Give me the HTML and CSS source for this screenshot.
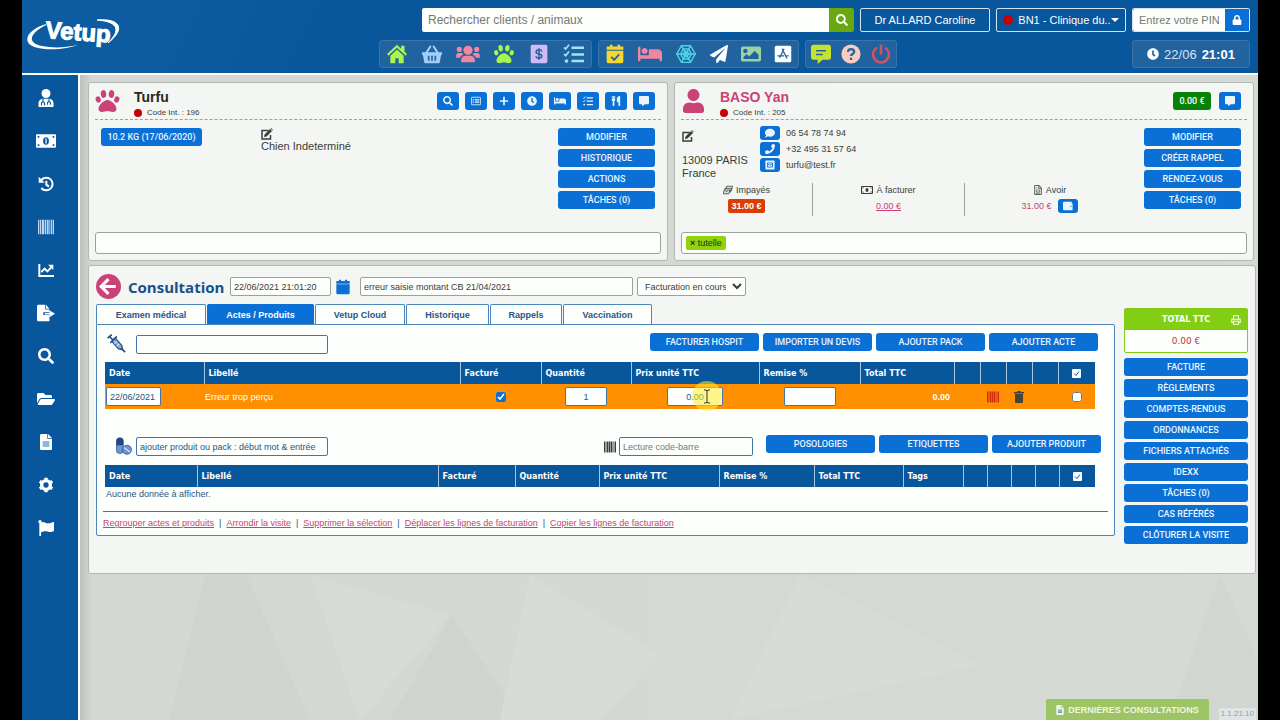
FILE: index.html
```html
<!DOCTYPE html>
<html lang="fr">
<head>
    <meta charset="UTF-8">
    <meta name="viewport" content="width=device-width, initial-scale=1.0">
    <title>Vetup - Consultation</title>
    <link rel="stylesheet" href="styles.css">
</head>
<body>
    <!-- Icônes -->
    <svg class="sprite" aria-hidden="true">
        <symbol id="search" viewBox="0 0 512 512"><path d="M505 442.7L405.3 343c-4.500-4.500-10.600-7-17-7H372c27.600-35.300 44-79.700 44-128C416 93.100 322.900 0 208 0S0 93.100 0 208s93.100 208 208 208c48.300 0 92.700-16.400 128-44v16.300c0 6.400 2.500 12.500 7 17l99.700 99.700c9.400 9.400 24.600 9.400 33.900 0l28.300-28.300c9.400-9.400 9.400-24.600.1-34zM208 336c-70.700 0-128-57.200-128-128 0-70.700 57.200-128 128-128 70.700 0 128 57.200 128 128 0 70.700-57.200 128-128 128z"/></symbol>
        <symbol id="lock" viewBox="0 0 448 512"><path d="M400 224h-24v-72C376 68.200 307.800 0 224 0S72 68.200 72 152v72H48c-26.500 0-48 21.500-48 48v192c0 26.500 21.500 48 48 48h352c26.500 0 48-21.500 48-48V272c0-26.500-21.500-48-48-48zm-104 0H152v-72c0-39.700 32.300-72 72-72s72 32.300 72 72v72z"/></symbol>
        <symbol id="clock" viewBox="0 0 512 512"><path d="M256 8C119 8 8 119 8 256s111 248 248 248 248-111 248-248S393 8 256 8zm57.100 350.100L224.900 294c-3.100-2.300-4.900-5.900-4.900-9.700V116c0-6.600 5.400-12 12-12h48c6.600 0 12 5.400 12 12v137.700l63.500 46.200c5.400 3.900 6.500 11.400 2.600 16.800l-28.200 38.800c-3.900 5.300-11.400 6.500-16.800 2.600z"/></symbol>
        <symbol id="home" viewBox="0 0 24 24"><path d="M12 1L0 12l1.500 2L12 4.500 22.500 14l1.500-2-3-2.700V2h-4v3.600z"/><path d="M12 6.500L4 14v9h6v-6h4v6h6v-9z"/></symbol>
        <symbol id="basket" viewBox="0 0 24 24"><path d="M0 10h24v3h-1l-2 10H3L1 13H0z"/><path d="M5 11l5-8M19 11l-5-8" fill="none" stroke="currentColor" stroke-width="2.500" stroke-linecap="round"/><path d="M8 14v6M12 14v6M16 14v6" stroke="#23649f" stroke-width="2"/></symbol>
        <symbol id="users" viewBox="0 0 26 24"><circle cx="13" cy="8" r="5"/><circle cx="3.500" cy="7" r="2.800"/><circle cx="22.500" cy="7" r="2.800"/><path d="M5.500 21v-2c0-3 2-5 5-5h5c3 0 5 2 5 5v2zM0 16v-2c0-2 1-3 3-3h3c1 0 1.500 1 2 1.500-2 1-3 2-3.500 3.500zM26 16v-2c0-2-1-3-3-3h-3c-1 0-1.500 1-2 1.500 2 1 3 2 3.500 3.500z"/></symbol>
        <symbol id="paw" viewBox="0 0 24 24"><path d="M12 11c-4 0-9 5.500-9 9 0 2 1.500 3 3.600 3 2.200 0 3.500-1 5.400-1s3.200 1 5.400 1c2.100 0 3.600-1 3.600-3 0-3.500-5-9-9-9z"/><ellipse cx="2.700" cy="10.500" rx="2.500" ry="3.200" transform="rotate(-18 2.700 10.500)"/><ellipse cx="8" cy="5" rx="2.700" ry="3.900" transform="rotate(-8 8 5)"/><ellipse cx="16" cy="5" rx="2.700" ry="3.900" transform="rotate(8 16 5)"/><ellipse cx="21.300" cy="10.500" rx="2.500" ry="3.200" transform="rotate(18 21.300 10.500)"/></symbol>
        <symbol id="dollar" viewBox="0 0 24 24"><rect x="2" y="1" width="20" height="22" rx="2"/><path d="M15.500 9c-.5-1.500-2-2-3.500-2-2 0-3.500 1-3.500 2.500 0 3.500 7 1.500 7 5 0 1.500-1.500 2.500-3.500 2.500s-3.500-1-3.700-2.300M12 5v14" fill="none" stroke="#23649f" stroke-width="1.800"/></symbol>
        <symbol id="tasks" viewBox="0 0 24 24"><path d="M9 3h15v3H9zM9 11h15v3H9zM9 19h15v3H9z"/><circle cx="3" cy="20.500" r="2.200"/><path d="M0 4l2 2 4-5M0 12l2 2 4-5" fill="none" stroke="currentColor" stroke-width="2"/></symbol>
        <symbol id="calcheck" viewBox="0 0 24 24"><path d="M2 4c0-1 .5-1 1-1h3V1h3v2h6V1h3v2h3c.5 0 1 0 1 1v3H2zM2 8h20v13c0 1-1 2-2 2H4c-1 0-2-1-2-2z"/><path d="M7.500 15.500l3.500 3.500 6-6.500" fill="none" stroke="#23649f" stroke-width="2.200"/></symbol>
        <symbol id="calendar" viewBox="0 0 24 24"><path d="M2 4c0-1 .5-1 1-1h3V1h3v2h6V1h3v2h3c.5 0 1 0 1 1v3H2zM2 8h20v13c0 1-1 2-2 2H4c-1 0-2-1-2-2z"/></symbol>
        <symbol id="bed" viewBox="0 0 640 512"><path d="M176 256c44.100 0 80-35.900 80-80s-35.900-80-80-80-80 35.900-80 80 35.900 80 80 80zm352-128H304c-8.800 0-16 7.200-16 16v144H64V80c0-8.800-7.200-16-16-16H16C7.200 64 0 71.200 0 80v352c0 8.800 7.200 16 16 16h32c8.800 0 16-7.200 16-16v-48h512v48c0 8.800 7.200 16 16 16h32c8.800 0 16-7.200 16-16V240c0-61.900-50.100-112-112-112z"/></symbol>
        <symbol id="web" viewBox="0 0 24 24"><g fill="none" stroke="currentColor" stroke-width="1.700"><path d="M6.500 2h11l5.500 10-5.500 10h-11L1 12z"/><path d="M9 6h6l3.500 6L15 18H9l-3.500-6zM10.500 9h3l1.700 3-1.700 3h-3l-1.700-3z"/><path d="M6.500 2l11 20M17.500 2l-11 20M0 12h24"/></g></symbol>
        <symbol id="plane" viewBox="0 0 512 512"><path d="M476 3.200L12.500 270.600c-18.100 10.400-15.800 35.600 2.200 43.200L121 358.400l287.300-253.200c5.500-4.900 13.300 2.600 8.600 8.300L176 407v80.500c0 23.600 28.500 32.900 42.500 15.800L282 426l124.600 52.200c14.200 6 30.400-2.900 33-18.200l72-432C515 7.800 493.300-6.800 476 3.200z"/></symbol>
        <symbol id="image" viewBox="0 0 512 512"><path d="M464 448H48c-26.500 0-48-21.500-48-48V112c0-26.500 21.500-48 48-48h416c26.500 0 48 21.500 48 48v288c0 26.500-21.500 48-48 48zM112 120c-31 0-56 25-56 56s25 56 56 56 56-25 56-56-25-56-56-56zM64 384h384V272l-87.500-87.500c-4.700-4.700-12.300-4.700-17 0L208 320l-55.500-55.500c-4.700-4.700-12.300-4.700-17 0L64 336v48z"/></symbol>
        <symbol id="app" viewBox="0 0 24 24"><rect x="1" y="1" width="22" height="22" rx="2"/><path d="M13.500 5L7.500 17M10.800 5l6.500 13M4.500 14.500h9M16.500 14.500h3" fill="none" stroke="#23649f" stroke-width="1.700"/></symbol>
        <symbol id="message" viewBox="0 0 24 24"><path d="M3 1h18c1.500 0 3 1 3 3v12c0 2-1.500 3-3 3h-7l-6 5v-5H3c-1.500 0-3-1-3-3V4c0-2 1.500-3 3-3z"/><path d="M6 8h12M6 12.500h8" stroke="#23649f" stroke-width="1.800"/></symbol>
        <symbol id="help" viewBox="0 0 24 24"><circle cx="12" cy="12" r="11.500"/><path d="M8.300 9.500C8.500 7 10 6 12 6c2.300 0 3.800 1.300 3.800 3.200 0 2.800-3.800 2.800-3.800 5.300M12 16.500v2.700" fill="none" stroke="#23649f" stroke-width="2.700"/></symbol>
        <symbol id="power" viewBox="0 0 24 24"><path d="M7 4.500a9.500 9.500 0 1 0 10 0M12 1v12" fill="none" stroke="currentColor" stroke-width="3"/></symbol>
        <symbol id="doctor" viewBox="0 0 24 24"><circle cx="12" cy="6" r="6"/><path d="M2 24v-5c0-4 3-6 6-6h8c3 0 6 2 6 6v5z"/><path d="M8 13v4M16 13v3M6 22v-2c0-4 4-4 4 0v2M14 21v-2c0-3 4-3 4 0v2" fill="none" stroke="#08569c" stroke-width="1.500"/></symbol>
        <symbol id="money" viewBox="0 0 24 24"><rect y="4" width="24" height="16" rx="1"/><ellipse cx="12" cy="12" rx="3.500" ry="4.500" fill="#08569c"/><path d="M12 9v6" stroke="#fff" stroke-width="1.500"/><path d="M2 6h2v2H2zM20 6h2v2h-2zM2 16h2v2H2zM20 16h2v2h-2z" fill="#08569c"/></symbol>
        <symbol id="moneyline" viewBox="0 0 24 16"><path d="M1 1h22v14H1z" fill="none" stroke="currentColor" stroke-width="2"/><ellipse cx="12" cy="8" rx="3" ry="4"/><path d="M3 3h3L3 6zM21 3h-3l3 3zM3 13h3l-3-3zM21 13h-3l3-3z"/></symbol>
        <symbol id="history" viewBox="0 0 24 24"><path d="M5 6a9.500 9.500 0 1 1 0 12M12.500 7v6l4 3" fill="none" stroke="currentColor" stroke-width="3"/><path d="M1 1v9h9z"/></symbol>
        <symbol id="barcode" viewBox="0 0 24 22"><path d="M0 0h2v22H0zM3 0h2v22H3zM6 0h3v22H6zM10 0h2v22h-2zM13 0h3v22h-3zM17 0h1v22h-1zM19 0h2v22h-2zM22 0h2v22h-2z"/></symbol>
        <symbol id="chart" viewBox="0 0 24 24"><path d="M2 3v18h22" fill="none" stroke="currentColor" stroke-width="3"/><path d="M5 15l5-5 4 4 6-6" fill="none" stroke="currentColor" stroke-width="3"/><path d="M15 4h8v8z"/></symbol>
        <symbol id="export" viewBox="0 0 26 24"><path d="M2 0h10v7h6v4H9v4h9v9H2c-1 0-2-1-2-2V2c0-1 1-2 2-2zM13 0l5 6h-5z"/><path d="M18 8l8 5-8 5v-4h-7v-2h7z"/></symbol>
        <symbol id="folder" viewBox="0 0 576 512"><path d="M572.700 292L500.300 416.200A64 64 0 0 1 445 448H45c-18.500 0-30-20-20.700-36l72.400-124.200A64 64 0 0 1 152 256h400c18.500 0 30 20 20.700 36zM152 224h328v-48c0-26.500-21.500-48-48-48H272l-64-64H48C21.500 64 0 85.500 0 112v278l69-118.400C86.200 242.200 118 224 152 224z"/></symbol>
        <symbol id="file" viewBox="0 0 18 24"><path d="M2 0h9v7h7v15c0 1-1 2-2 2H2c-1 0-2-1-2-2V2c0-1 1-2 2-2zM12 0l6 6h-6z"/><path d="M4 12h10M4 15h10M4 18h10" stroke="#08569c" stroke-width="1.300"/></symbol>
        <symbol id="gear" viewBox="0 0 24 24"><circle cx="12" cy="12" r="6.500" fill="none" stroke="currentColor" stroke-width="5"/><path d="M12 1v4M12 19v4M2.500 6.500L6 8.500M18 15.500l3.500 2M2.500 17.500l3.500-2M18 8.500l3.500-2" stroke="currentColor" stroke-width="5"/></symbol>
        <symbol id="flag" viewBox="0 0 24 24"><circle cx="3" cy="2.500" r="2.500"/><path d="M2 2h2.500v22H2zM4 4c5-3 8 2 12 1 3 0 5-1.500 8-2v13c-4 3-8 2-11 1-3-.500-5 0-9 2z"/></symbol>
        <symbol id="user" viewBox="0 0 448 512"><path d="M224 256c70.700 0 128-57.300 128-128S294.700 0 224 0 96 57.300 96 128s57.300 128 128 128zm89.600 32h-16.700c-22.200 10.200-46.900 16-72.900 16s-50.600-5.800-72.900-16h-16.700C60.200 288 0 348.200 0 422.400V464c0 26.500 21.500 48 48 48h352c26.500 0 48-21.500 48-48v-41.600c0-74.200-60.200-134.400-134.400-134.400z"/></symbol>
        <symbol id="list" viewBox="0 0 24 20"><rect x="1" y="1" width="22" height="18" rx="2" fill="none" stroke="currentColor" stroke-width="2"/><path d="M4 5h3v2H4zM9 5h11v2H9zM4 9h3v2H4zM9 9h11v2H9zM4 13h3v2H4zM9 13h11v2H9z"/></symbol>
        <symbol id="plus" viewBox="0 0 24 24"><path d="M10 2h4v8h8v4h-8v8h-4v-8H2v-4h8z"/></symbol>
        <symbol id="utensils" viewBox="0 0 24 24"><path d="M2 0h2v7h1V0h2v7h1V0h2v9c0 2-1 3-2 3v12H4V12c-1 0-2-1-2-3zM22 0v24h-4v-9h-4V7c0-4 4-7 8-7z"/></symbol>
        <symbol id="bubble" viewBox="0 0 512 512"><path d="M448 0H64C28.700 0 0 28.700 0 64v288c0 35.300 28.700 64 64 64h96v84c0 9.800 11.200 15.500 19.100 9.700L304 416h144c35.300 0 64-28.700 64-64V64c0-35.300-28.700-64-64-64z"/></symbol>
        <symbol id="comment" viewBox="0 0 512 512"><path d="M256 32C114.600 32 0 125.100 0 240c0 49.600 21.400 95 57 130.700C44.500 421.100 2.700 466 2.200 466.500c-2.200 2.300-2.800 5.700-1.500 8.700S4.800 480 8 480c66.300 0 116-31.800 140.600-51.400 32.700 12.300 69 19.400 107.400 19.400 141.400 0 256-93.100 256-208S397.400 32 256 32z"/></symbol>
        <symbol id="phone" viewBox="0 0 512 512"><path d="M493.400 24.600l-104-24c-11.300-2.600-22.900 3.300-27.500 13.900l-48 112c-4.200 9.800-1.400 21.300 6.900 28l60.600 49.600c-36 76.700-98.900 140.500-177.200 177.200l-49.600-60.600c-6.800-8.300-18.200-11.100-28-6.900l-112 48C3.900 366.500-2 378.100.6 389.400l24 104C27.100 504.200 36.700 512 48 512c256.100 0 464-207.500 464-464 0-11.200-7.700-20.900-18.600-23.400z"/></symbol>
        <symbol id="mail" viewBox="0 0 24 24"><rect x="1" y="1" width="22" height="22" rx="2"/><path d="M6 7h12v10H6zM6 9l6 4 6-4" fill="none" stroke="#0b70d5" stroke-width="2"/></symbol>
        <symbol id="edit" viewBox="0 0 24 24"><path d="M15 5H2v17h17v-8" fill="none" stroke="currentColor" stroke-width="3"/><path d="M7 13L18 2l4 4-11 11-5 1zM19 1l1-1 4 4-1 1z"/></symbol>
        <symbol id="stack" viewBox="0 0 24 24"><g fill="none" stroke="currentColor" stroke-width="2"><path d="M7 8l2-5h14l-3 10h-3M4 12l1-4h15l-2 9h-3"/><path d="M3 12h13l-2 9H1z"/><path d="M6 16h5"/></g></symbol>
        <symbol id="doc" viewBox="0 0 20 24"><path d="M2 1h11l5 6v16H2zM12 1v7h6" fill="none" stroke="currentColor" stroke-width="2"/><path d="M5 7h4M6 12h8v5H6zM5 20h10" fill="none" stroke="currentColor" stroke-width="1.500"/></symbol>
        <symbol id="wallet" viewBox="0 0 24 24"><path d="M2 2h19v4h2v16H2c-1 0-2-1-2-2V4c0-1 1-2 2-2z"/><circle cx="19" cy="13" r="1.500" fill="#0b70d5"/></symbol>
        <symbol id="back" viewBox="0 0 24 24"><circle cx="12" cy="12" r="12"/><path d="M19 12H6M12 5l-7 7 7 7" fill="none" stroke="#fff" stroke-width="3"/></symbol>
        <symbol id="syringe" viewBox="0 0 24 24"><path d="M7 10l4-4 8 9 1 5-5-1z" fill="#8eaee0" stroke="#2b4f8c" stroke-width="1.500"/><path d="M18 18l5 5M5 12l8-8M2 6l5-4M4 4l5 5" stroke="#2b4f8c" stroke-width="2"/><path d="M10 13l3-3M13 16l3-3" stroke="#fff"/></symbol>
        <symbol id="pills" viewBox="0 0 24 24"><rect x="2" y="1" width="9" height="21" rx="4" fill="#6b93d6" stroke="#2b4f8c"/><path d="M2 11h9V5c0-5-9-5-9 0z" fill="#22477f"/><circle cx="16" cy="17" r="6" fill="#6b93d6" stroke="#2b4f8c"/><path d="M12 14l8 6" stroke="#dce8fb" stroke-width="1.500"/></symbol>
        <symbol id="trash" viewBox="0 0 20 24"><path d="M0 2h6l1-2h6l1 2h6v3H0zM2 6h16v16c0 1-1 2-2 2H4c-1 0-2-1-2-2z"/></symbol>
        <symbol id="print" viewBox="0 0 24 24"><path d="M6 10V2h12v8M6 18H2v-8h20v8h-4M6 15h12v7H6z" fill="none" stroke="currentColor" stroke-width="2.500"/></symbol>
    </svg>

    <div class="app">
        <header class="entete">
            <a class="logo" href="#" aria-label="Vetup">
                <svg viewBox="0 0 96 42" width="96" height="42">
                    <path d="M20 13C0 19-6 33 12 37c14 3 32 0 40-3-14 3-26 3-36 1C0 32 4 22 20 14z" fill="#fff"/>
                    <path d="M71 9c22-2 30 8 11 23 12-12 12-21-11-23z" fill="#fff" stroke="#fff"/>
                    <text x="19" y="27" transform="rotate(4 19 27)" class="logo-texte">Vetup</text>
                </svg>
            </a>
            <div class="outils">
                <div class="ligne-recherche">
                    <form class="recherche">
                        <input type="text" aria-label="Rechercher" placeholder="Rechercher clients / animaux">
                        <button type="button" class="btn-recherche" aria-label="Rechercher"><svg class="ico-12"><use href="#search"/></svg></button>
                    </form>
                    <button class="btn-contour">Dr ALLARD Caroline</button>
                    <button class="btn-contour"><span class="point"></span>BN1 - Clinique du..<span class="fleche"></span></button>
                    <form class="pin">
                        <input type="text" aria-label="Code PIN" placeholder="Entrez votre PIN">
                        <button type="button" aria-label="Verrouiller"><svg class="ico-10"><use href="#lock"/></svg></button>
                    </form>
                </div>
                <div class="ligne-icones">
                    <nav class="groupe">
                        <a href="#" aria-label="Accueil" class="vert"><svg class="ico-22"><use href="#home"/></svg></a>
                        <a href="#" aria-label="Ventes" class="ciel"><svg class="ico-22"><use href="#basket"/></svg></a>
                        <a href="#" aria-label="Clients" class="rose"><svg class="ico-24"><use href="#users"/></svg></a>
                        <a href="#" aria-label="Animaux" class="vert"><svg class="ico-22"><use href="#paw"/></svg></a>
                        <a href="#" aria-label="Caisse" class="mauve"><svg class="ico-22"><use href="#dollar"/></svg></a>
                        <a href="#" aria-label="Tâches" class="cyan"><svg class="ico-22"><use href="#tasks"/></svg></a>
                    </nav>
                    <nav class="groupe">
                        <a href="#" aria-label="Agenda" class="jaune"><svg class="ico-20"><use href="#calcheck"/></svg></a>
                        <a href="#" aria-label="Hospitalisation" class="rose"><svg class="ico-24"><use href="#bed"/></svg></a>
                        <a href="#" aria-label="Réseau" class="turquoise"><svg class="ico-22"><use href="#web"/></svg></a>
                        <a href="#" aria-label="Envois"><svg class="ico-18"><use href="#plane"/></svg></a>
                        <a href="#" aria-label="Images" class="sauge"><svg class="ico-20"><use href="#image"/></svg></a>
                        <a href="#" aria-label="Applications"><svg class="ico-18"><use href="#app"/></svg></a>
                    </nav>
                    <nav class="groupe serre">
                        <a href="#" aria-label="Messages" class="citron"><svg class="ico-20"><use href="#message"/></svg></a>
                        <a href="#" aria-label="Aide" class="peche"><svg class="ico-20"><use href="#help"/></svg></a>
                        <a href="#" aria-label="Quitter" class="rouge"><svg class="ico-20"><use href="#power"/></svg></a>
                    </nav>
                    <div class="horloge"><svg class="ico-12"><use href="#clock"/></svg><span>22/06</span><b>21:01</b></div>
                </div>
            </div>
        </header>

        <div class="corps">
            <nav class="menu">
                <a href="#" aria-label="Vétérinaires"><svg class="ico-18"><use href="#doctor"/></svg></a>
                <a href="#" aria-label="Paiements"><svg class="ico-20"><use href="#money"/></svg></a>
                <a href="#" aria-label="Historique"><svg class="ico-16"><use href="#history"/></svg></a>
                <a href="#" aria-label="Produits" class="pale"><svg class="ico-16"><use href="#barcode"/></svg></a>
                <a href="#" aria-label="Statistiques"><svg class="ico-16"><use href="#chart"/></svg></a>
                <a href="#" aria-label="Export"><svg class="ico-18"><use href="#export"/></svg></a>
                <a href="#" aria-label="Recherche"><svg class="ico-16"><use href="#search"/></svg></a>
                <a href="#" aria-label="Dossiers"><svg class="ico-18"><use href="#folder"/></svg></a>
                <a href="#" aria-label="Documents"><svg class="ico-16"><use href="#file"/></svg></a>
                <a href="#" aria-label="Réglages"><svg class="ico-16"><use href="#gear"/></svg></a>
                <a href="#" aria-label="Signalement"><svg class="ico-16"><use href="#flag"/></svg></a>
            </nav>

            <main class="contenu">
                <svg class="fond" viewBox="0 0 1178 645" preserveAspectRatio="none" aria-hidden="true">
                    <path d="M140 440l90 205H90zM372 540l70 105H310zM1140 500l-50 145h88v-60z" fill="#c8cdc8"/>
                    <path d="M450 500l130 80-60 65H420zM720 500l180 90-250 55zM230 500l140 40-90 105z" fill="#dfe3de"/>
                </svg>
                <div class="fiches">
                    <!-- Animal -->
                    <section class="carte fiche">
                        <div class="fiche-titre">
                            <svg class="avatar"><use href="#paw"/></svg>
                            <div class="identite">
                                <h2>Turfu</h2>
                                <p class="code"><span class="point"></span>Code Int. : 196</p>
                            </div>
                            <div class="actions">
                                <button class="btn" aria-label="Rechercher"><svg class="ico-10"><use href="#search"/></svg></button>
                                <button class="btn" aria-label="Liste"><svg class="ico-10"><use href="#list"/></svg></button>
                                <button class="btn" aria-label="Ajouter"><svg class="ico-10"><use href="#plus"/></svg></button>
                                <button class="btn" aria-label="Rendez-vous"><svg class="ico-10"><use href="#clock"/></svg></button>
                                <button class="btn" aria-label="Hospitaliser"><svg class="ico-12"><use href="#bed"/></svg></button>
                                <button class="btn" aria-label="Tâches"><svg class="ico-10"><use href="#tasks"/></svg></button>
                                <button class="btn" aria-label="Alimentation"><svg class="ico-10"><use href="#utensils"/></svg></button>
                                <button class="btn" aria-label="Commentaire"><svg class="ico-10"><use href="#bubble"/></svg></button>
                            </div>
                        </div>
                        <div class="fiche-corps animal">
                            <div class="poids"><button class="btn">10.2 KG (17/06/2020)</button></div>
                            <div class="espece">
                                <svg class="ico-12"><use href="#edit"/></svg>
                                <p>Chien Indeterminé</p>
                            </div>
                            <div class="boutons">
                                <button class="btn">MODIFIER</button>
                                <button class="btn">HISTORIQUE</button>
                                <button class="btn">ACTIONS</button>
                                <button class="btn">TÂCHES (0)</button>
                            </div>
                        </div>
                        <input type="text" class="etiquettes" aria-label="Étiquettes de l'animal">
                    </section>

                    <!-- Client -->
                    <section class="carte fiche">
                        <div class="fiche-titre">
                            <svg class="avatar"><use href="#user"/></svg>
                            <div class="identite">
                                <h2 class="client">BASO Yan</h2>
                                <p class="code"><span class="point"></span>Code Int. : 205</p>
                            </div>
                            <div class="actions large">
                                <button class="btn solde">0.00 €</button>
                                <button class="btn" aria-label="Commentaire"><svg class="ico-10"><use href="#bubble"/></svg></button>
                            </div>
                        </div>
                        <div class="fiche-corps">
                            <div class="infos">
                                <div class="coordonnees">
                                    <div class="adresse">
                                        <svg class="ico-12"><use href="#edit"/></svg>
                                        <p>13009 PARIS<br>France</p>
                                    </div>
                                    <ul class="contacts">
                                        <li><button class="btn mini" aria-label="SMS"><svg class="ico-10"><use href="#comment"/></svg></button>06 54 78 74 94</li>
                                        <li><button class="btn mini" aria-label="Appeler"><svg class="ico-10"><use href="#phone"/></svg></button>+32 495 31 57 64</li>
                                        <li><button class="btn mini" aria-label="Écrire"><svg class="ico-10"><use href="#mail"/></svg></button>turfu@test.fr</li>
                                    </ul>
                                </div>
                                <div class="finances">
                                    <div>
                                        <p><svg class="ico-10"><use href="#stack"/></svg> Impayés</p>
                                        <p><span class="impaye">31.00 €</span></p>
                                    </div>
                                    <div>
                                        <p><svg class="ico-12"><use href="#moneyline"/></svg> À facturer</p>
                                        <p><a href="#">0.00 €</a></p>
                                    </div>
                                    <div>
                                        <p><svg class="ico-10"><use href="#doc"/></svg> Avoir</p>
                                        <p class="avoir">31.00 € <button class="btn mini" aria-label="Portefeuille"><svg class="ico-10"><use href="#wallet"/></svg></button></p>
                                    </div>
                                </div>
                            </div>
                            <div class="boutons">
                                <button class="btn">MODIFIER</button>
                                <button class="btn">CRÉER RAPPEL</button>
                                <button class="btn">RENDEZ-VOUS</button>
                                <button class="btn">TÂCHES (0)</button>
                            </div>
                        </div>
                        <div class="etiquettes"><button class="tag"><b>×</b> tutelle</button></div>
                    </section>
                </div>

                <!-- Consultation -->
                <section class="carte consultation">
                    <div class="visite">
                        <div class="visite-titre">
                            <a href="#" class="retour" aria-label="Retour"><svg><use href="#back"/></svg></a>
                            <h1>Consultation</h1>
                            <input type="text" class="champ date-heure" aria-label="Date" value="22/06/2021 21:01:20">
                            <button class="agenda" aria-label="Calendrier"><svg class="ico-16"><use href="#calendar"/></svg></button>
                            <input type="text" class="champ motif" aria-label="Motif" value="erreur saisie montant CB 21/04/2021">
                            <select class="champ statut" aria-label="Statut">
                                <option>Facturation en cours</option>
                            </select>
                        </div>

                        <div class="onglets">
                            <button class="onglet o-110">Examen médical</button>
                            <button class="onglet o-107 actif">Actes / Produits</button>
                            <button class="onglet o-90">Vetup Cloud</button>
                            <button class="onglet o-83">Historique</button>
                            <button class="onglet o-72">Rappels</button>
                            <button class="onglet o-89">Vaccination</button>
                        </div>

                        <div class="panneau">
                            <div class="barre">
                                <svg class="ico-20"><use href="#syringe"/></svg>
                                <input type="text" class="saisie" aria-label="Ajouter un acte">
                                <div class="barre-btns">
                                    <button class="btn">FACTURER HOSPIT</button>
                                    <button class="btn">IMPORTER UN DEVIS</button>
                                    <button class="btn">AJOUTER PACK</button>
                                    <button class="btn">AJOUTER ACTE</button>
                                </div>
                            </div>

                            <table class="grille actes">
                                <colgroup>
                                    <col class="c-date"><col><col class="c-facture"><col class="c-quantite"><col class="c-prix"><col class="c-remise"><col class="c-total">
                                    <col class="c-ico"><col class="c-ico"><col class="c-ico"><col class="c-ico"><col class="c-coche">
                                </colgroup>
                                <thead>
                                    <tr>
                                        <th>Date</th><th>Libellé</th><th>Facturé</th><th>Quantité</th><th>Prix unité TTC</th><th>Remise %</th><th>Total TTC</th>
                                        <th></th><th></th><th></th><th></th>
                                        <th class="centre"><input type="checkbox" class="coche" aria-label="Tout cocher" checked></th>
                                    </tr>
                                </thead>
                                <tbody>
                                    <tr>
                                        <td class="bord"><input type="text" class="saisie w-55" aria-label="Date de l'acte" value="22/06/2021"></td>
                                        <td class="bord">Erreur trop perçu</td>
                                        <td class="centre"><input type="checkbox" class="case" aria-label="Facturé" checked></td>
                                        <td class="centre"><input type="text" class="saisie w-42" aria-label="Quantité" value="1"></td>
                                        <td class="centre prix">
                                            <input type="text" class="saisie w-56" aria-label="Prix unité TTC" value="0.00">
                                            <svg class="curseur" viewBox="0 0 30 30"><circle cx="15" cy="15" r="15" fill="#ffee32" fill-opacity=".55"/><path d="M12 9h2l1 1 1-1h2M15 10v11M12 22h2l1-1 1 1h2" fill="none" stroke="#333"/></svg>
                                        </td>
                                        <td class="centre"><input type="text" class="saisie w-52" aria-label="Remise"></td>
                                        <td class="droite">0.00</td>
                                        <td></td>
                                        <td class="centre lot"><svg class="ico-12"><use href="#barcode"/></svg></td>
                                        <td class="centre poubelle"><svg class="ico-12"><use href="#trash"/></svg></td>
                                        <td></td>
                                        <td class="centre"><input type="checkbox" class="case" aria-label="Sélectionner"></td>
                                    </tr>
                                </tbody>
                            </table>

                            <div class="barre produits">
                                <svg class="ico-18"><use href="#pills"/></svg>
                                <input type="text" class="saisie" aria-label="Ajouter un produit" value="ajouter produit ou pack : début mot &amp; entrée">
                                <div class="code-barre">
                                    <svg class="ico-12"><use href="#barcode"/></svg>
                                    <input type="text" class="saisie" aria-label="Code-barre" placeholder="Lecture code-barre">
                                </div>
                                <div class="barre-btns">
                                    <button class="btn">POSOLOGIES</button>
                                    <button class="btn">ETIQUETTES</button>
                                    <button class="btn">AJOUTER PRODUIT</button>
                                </div>
                            </div>

                            <table class="grille">
                                <colgroup>
                                    <col class="p-date"><col><col class="p-facture"><col class="p-quantite"><col class="p-prix"><col class="p-remise"><col class="p-total"><col class="p-tags">
                                    <col class="p-ico"><col class="p-ico"><col class="p-ico"><col class="p-ico"><col class="p-coche">
                                </colgroup>
                                <thead>
                                    <tr>
                                        <th>Date</th><th>Libellé</th><th>Facturé</th><th>Quantité</th><th>Prix unité TTC</th><th>Remise %</th><th>Total TTC</th><th>Tags</th>
                                        <th></th><th></th><th></th><th></th>
                                        <th class="centre"><input type="checkbox" class="coche" aria-label="Tout cocher" checked></th>
                                    </tr>
                                </thead>
                            </table>
                            <p class="vide">Aucune donnée à afficher.</p>

                            <div class="liens">
                                <a href="#">Regrouper actes et produits</a><span>|</span>
                                <a href="#">Arrondir la visite</a><span>|</span>
                                <a href="#">Supprimer la sélection</a><span>|</span>
                                <a href="#">Déplacer les lignes de facturation</a><span>|</span>
                                <a href="#">Copier les lignes de facturation</a>
                            </div>
                        </div>
                    </div>

                    <aside class="resume">
                        <div class="total">
                            <div class="total-titre">TOTAL TTC<svg class="ico-10"><use href="#print"/></svg></div>
                            <div class="total-montant">0.00 €</div>
                        </div>
                        <button class="btn">FACTURE</button>
                        <button class="btn">RÈGLEMENTS</button>
                        <button class="btn">COMPTES-RENDUS</button>
                        <button class="btn">ORDONNANCES</button>
                        <button class="btn">FICHIERS ATTACHÉS</button>
                        <button class="btn">IDEXX</button>
                        <button class="btn">TÂCHES (0)</button>
                        <button class="btn">CAS RÉFÉRÉS</button>
                        <button class="btn">CLÔTURER LA VISITE</button>
                    </aside>
                </section>

                <footer class="pied">
                    <button class="dernieres"><svg class="ico-10"><use href="#file"/></svg>DERNIÈRES CONSULTATIONS</button>
                    <span class="version">1.1.21.10</span>
                </footer>
            </main>
        </div>
    </div>
</body>
</html>
```

FILE: styles.css
```css
:root {
    --bleu: #08569c;
    --bleu-vif: #0b70d5;
    --rose: #cb4277;
    --texte: #3a3d3a;
    --texte-bleu: #2a5585;
    --blanc: #fcfffb;
    --bord: #9da19d;
}

* {
    box-sizing: border-box;
}

body {
    margin: 0;
    background: #000;
    color: var(--texte);
    font-family: "Liberation Sans", Arial, sans-serif;
    font-size: 9px;
}

h1, h2, p, ul {
    margin: 0;
    padding: 0;
}

ul {
    list-style: none;
}

svg {
    fill: currentColor;
    display: block;
    flex: none;
}

input, select, button {
    font: inherit;
    color: inherit;
    margin: 0;
}

button {
    cursor: pointer;
    border: 0;
    padding: 0;
}

.sprite {
    display: none;
}

.ico-10 { width: 10px; height: 10px; }
.ico-12 { width: 12px; height: 12px; }
.ico-16 { width: 16px; height: 16px; }
.ico-18 { width: 18px; height: 18px; }
.ico-20 { width: 20px; height: 20px; }
.ico-22 { width: 22px; height: 20px; }
.ico-24 { width: 24px; height: 22px; }

.app {
    margin: 0 22px;
    min-height: 100vh;
    display: flex;
    flex-direction: column;
}

/* En-tête */
.entete {
    display: flex;
    height: 75px;
    padding: 8px 8px 0 4px;
    background: linear-gradient(115deg, #0d5ba1 0%, #0d5ba1 12%, var(--bleu) 26%, var(--bleu) 100%);
    border-bottom: 2px solid #fff;
}

.logo {
    width: 353px;
    padding-top: 3px;
}

.logo-texte {
    font-family: "Liberation Sans", Arial, sans-serif;
    font-weight: bold;
    font-size: 24px;
    fill: #fff;
    stroke: #fff;
}

.outils {
    flex: 1;
    min-width: 0;
}

.ligne-recherche {
    display: flex;
    gap: 6px;
    height: 24px;
    padding-left: 43px;
    font-size: 11px;
}

.recherche {
    flex: 1;
    display: flex;
    font-size: 12px;
}

.recherche input,
.pin input {
    flex: 1;
    min-width: 0;
    border: 0;
    padding: 0 6px;
    background: var(--blanc);
    border-radius: 2px 0 0 2px;
}

::placeholder {
    color: #747a74;
    opacity: 1;
}

.btn-recherche {
    width: 25px;
    display: grid;
    place-items: center;
    background: #6aa812;
    color: #fff;
    border-radius: 0 2px 2px 0;
}

.btn-contour {
    width: 130px;
    display: flex;
    align-items: center;
    justify-content: center;
    background: transparent;
    color: #fff;
    border: 1px solid #d4e2ef;
    border-radius: 2px;
    white-space: nowrap;
}

.point {
    width: 8px;
    height: 8px;
    margin-right: 5px;
    border-radius: 50%;
    background: #c90000;
}

.btn-contour .point {
    width: 10px;
    height: 10px;
}

.fleche {
    border: 4px solid transparent;
    border-top-color: #fff;
    border-bottom: 0;
}

.pin {
    width: 118px;
    display: flex;
    border: 1px solid #d4e2ef;
    border-radius: 2px;
}

.pin button {
    width: 24px;
    display: grid;
    place-items: center;
    background: var(--bleu-vif);
    color: #fff;
}

.ligne-icones {
    display: flex;
    gap: 6px;
    margin-top: 8px;
}

.groupe,
.horloge {
    display: flex;
    align-items: center;
    height: 28px;
    padding: 0 6px;
    background: #21639f;
    border: 1px solid #3874aa;
    border-radius: 3px;
}

.groupe {
    gap: 13px;
}

.groupe.serre {
    gap: 10px;
    padding: 0 5px;
}

.groupe a,
.menu a {
    color: #fff;
}

.groupe .vert { color: #a9f54d; }
.groupe .ciel { color: #a3cdf7; }
.groupe .rose { color: #f286a2; }
.groupe .mauve { color: #d3b9f5; }
.groupe .cyan { color: #9ee4fb; }
.groupe .jaune { color: #f8d62d; }
.groupe .turquoise { color: #4ed4e6; }
.groupe .sauge { color: #9cd2a1; }
.groupe .citron { color: #c5e22f; }
.groupe .peche { color: #f9ccc1; }
.groupe .rouge { color: #d4515f; }

.horloge {
    width: 118px;
    margin-left: auto;
    justify-content: center;
    gap: 5px;
    color: #fff;
    font-size: 13px;
}

.horloge span {
    color: #d3e3f2;
}

/* Menu latéral */
.corps {
    flex: 1;
    display: flex;
}

.menu {
    width: 58px;
    padding: 1px 8px 0 0;
    background: var(--bleu);
    border-right: 2px solid #fff;
}

.menu a {
    height: 43px;
    display: grid;
    place-items: center;
}

.menu .pale {
    color: #bdd3ec;
}

/* Contenu */
.contenu {
    flex: 1;
    min-width: 0;
    display: flex;
    flex-direction: column;
    position: relative;
    padding: 7px 4px 0 8px;
    background: linear-gradient(90deg, #bfc3bf 0, #d3d8d3 12px, #d6dad5 100%);
}

.fond {
    position: absolute;
    inset: 0;
    width: 100%;
    height: 100%;
    opacity: 0.3;
}

.fiches {
    position: relative;
    display: grid;
    grid-template-columns: 1fr 1fr;
    gap: 6px;
}

.carte {
    background: #f3f6f2;
    border: 1px solid #b3b7b3;
    border-radius: 3px;
}

.fiche {
    padding: 0 6px 6px;
}

.fiche-titre {
    display: flex;
    height: 37px;
    border-bottom: 1px dashed #9ba19b;
}

.avatar {
    width: 25px;
    height: 24px;
    margin-top: 6px;
    color: var(--rose);
}

.identite {
    flex: 1;
    margin-left: 14px;
}

.identite h2 {
    font-size: 14px;
    line-height: 16px;
    margin-top: 6px;
    color: #292a20;
}

.identite .client {
    color: var(--rose);
}

.code {
    display: flex;
    align-items: center;
    margin-top: 3px;
    font-size: 8px;
    line-height: 10px;
}

.actions {
    display: flex;
    gap: 6px;
    margin: 9px 6px 0 0;
}

.actions.large {
    gap: 8px;
}

.btn {
    display: grid;
    place-items: center;
    height: 18px;
    background: var(--bleu-vif);
    color: #e9f4ff;
    border-radius: 3px;
    font-family: Roboto, sans-serif;
    font-size: 9px;
    font-weight: 500;
    white-space: nowrap;
}

.actions .btn {
    width: 22px;
}

.actions .btn.solde {
    width: 38px;
    background: #078207;
    color: #fff;
}

.fiche-corps {
    display: flex;
    height: 112px;
    padding: 8px 6px 0 0;
}

.animal {
    padding-left: 6px;
}

.poids {
    width: 160px;
}

.poids .btn {
    width: 101px;
}

.espece {
    flex: 1;
    font-size: 11px;
    line-height: 12px;
}

.boutons {
    width: 97px;
    display: flex;
    flex-direction: column;
    gap: 3px;
}

.infos {
    flex: 1;
}

.coordonnees {
    display: flex;
    height: 55px;
}

.adresse {
    width: 79px;
    padding: 2px 1px 0;
    font-size: 11px;
    line-height: 13px;
}

.adresse p {
    margin-top: 12px;
}

.contacts li {
    display: flex;
    align-items: center;
    gap: 6px;
    height: 14px;
    margin-bottom: 2px;
}

.contacts {
    margin-top: -2px;
}

.btn.mini {
    width: 20px;
    height: 14px;
}

.finances {
    display: grid;
    grid-template-columns: 131px 152px 1fr;
    text-align: center;
}

.finances div {
    height: 33px;
}

.finances div + div {
    border-left: 1px solid var(--bord);
}

.finances div:last-child {
    padding-right: 10px;
}

.finances p {
    display: flex;
    align-items: center;
    justify-content: center;
    gap: 3px;
    height: 14px;
    margin-bottom: 2px;
}

.finances a,
.avoir {
    color: var(--rose);
}

.finances .avoir {
    gap: 6px;
}

.impaye {
    padding: 2px 3px;
    background: #da3e05;
    color: #fff;
    border-radius: 2px;
    font-weight: bold;
}

.etiquettes {
    display: flex;
    align-items: center;
    width: 100%;
    height: 22px;
    padding: 0 4px;
    background: var(--blanc);
    border: 1px solid var(--bord);
    border-radius: 3px;
}

.tag {
    height: 14px;
    padding: 0 4px;
    background: #91d30d;
    color: #26330b;
    border-radius: 2px;
}

/* Consultation */
.consultation {
    position: relative;
    display: flex;
    gap: 9px;
    margin: 4px -2px 0 0;
    padding: 7px 7px 29px 7px;
}

.visite {
    flex: 1;
    min-width: 0;
}

.visite-titre {
    display: flex;
    align-items: center;
    height: 27px;
}

.retour svg {
    width: 25px;
    height: 25px;
    color: var(--rose);
}

.visite-titre h1 {
    width: 102px;
    margin-left: 7px;
    font-family: "Open Sans", sans-serif;
    font-size: 15px;
    font-weight: bold;
    color: #17508c;
}

.champ {
    height: 19px;
    padding: 0 3px;
    background: var(--blanc);
    border: 1px solid var(--bord);
    border-radius: 2px;
}

.date-heure {
    width: 101px;
}

.agenda {
    margin: 0 9px 0 4px;
    background: none;
    color: var(--bleu-vif);
}

.motif {
    width: 273px;
}

.statut {
    width: 109px;
    margin-left: 4px;
}

.onglets {
    display: flex;
    gap: 1px;
    margin-top: 4px;
}

.onglet {
    height: 20px;
    background: var(--blanc);
    color: var(--texte-bleu);
    border: 1px solid #4d86b8;
    border-bottom: 0;
    border-radius: 2px 2px 0 0;
    font-weight: bold;
}

.onglet.actif {
    background: var(--bleu-vif);
    border-color: var(--bleu-vif);
    color: #fff;
}

.o-110 { width: 110px; }
.o-107 { width: 107px; }
.o-90 { width: 90px; }
.o-83 { width: 83px; }
.o-72 { width: 72px; }
.o-89 { width: 89px; }

.panneau {
    height: 212px;
    padding: 8px 6px 0;
    background: var(--blanc);
    border: 1px solid #4d86b8;
    border-radius: 0 2px 2px 2px;
    color: var(--texte-bleu);
}

.barre {
    display: flex;
    height: 29px;
    padding: 0 10px 0 3px;
}

.saisie {
    width: 192px;
    height: 19px;
    padding: 0 3px;
    background: var(--blanc);
    border: 1px solid #4675a5;
    border-radius: 2px;
    color: var(--texte-bleu);
}

.barre > .saisie {
    margin: 2px 0 0 10px;
}

.barre-btns {
    display: flex;
    gap: 4px;
    margin-left: auto;
}

.barre-btns .btn {
    width: 109px;
}

.grille {
    width: calc(100% - 15px);
    margin-left: 2px;
    table-layout: fixed;
    border-collapse: collapse;
}

.grille th {
    height: 22px;
    padding: 0 4px;
    background: var(--bleu);
    color: #fff;
    border-left: 1px solid #a9c5e0;
    text-align: left;
    font-family: "DejaVu Sans", Verdana, sans-serif;
    font-size: 8px;
}

.grille th:first-child {
    border-left: 0;
}

.grille td {
    height: 25px;
    padding: 0;
    background: #ff8f00;
    color: #fff;
}

.grille td.bord {
    padding-left: 1px;
}

.grille .centre {
    padding: 0;
    text-align: center;
}

.grille .droite {
    padding-right: 4px;
    text-align: right;
    font-weight: bold;
}

.grille td svg {
    margin: 0 auto;
}

.grille .lot {
    color: #cf2a12;
}

.grille .poubelle {
    color: #45443b;
}

.centre .saisie {
    text-align: center;
}

.saisie.w-42 { width: 42px; }
.saisie.w-52 { width: 52px; }
.saisie.w-55 { width: 55px; }
.saisie.w-56 { width: 56px; }

.c-date { width: 99px; }
.c-facture { width: 81px; }
.c-quantite { width: 90px; }
.c-prix { width: 128px; }
.c-remise { width: 101px; }
.c-total { width: 94px; }
.c-ico { width: 26px; }
.c-coche { width: 37px; }

.p-date { width: 92px; }
.p-facture { width: 77px; }
.p-quantite { width: 84px; }
.p-prix { width: 120px; }
.p-remise { width: 95px; }
.p-total { width: 89px; }
.p-tags { width: 60px; }
.p-ico { width: 24px; }
.p-coche { width: 36px; }

.case {
    width: 10px;
    height: 10px;
    vertical-align: middle;
    accent-color: var(--bleu-vif);
}

.coche {
    appearance: none;
    width: 9px;
    height: 9px;
    vertical-align: middle;
    border-radius: 1px;
    background: #fff url("data:image/svg+xml,%3Csvg xmlns='http://www.w3.org/2000/svg' viewBox='0 0 9 9'%3E%3Cpath d='M2 4.500l2 2 3-4' fill='none' stroke='%2308569c'/%3E%3C/svg%3E");
}

.prix {
    position: relative;
}

/* Halo du pointeur */
.grille .curseur {
    position: absolute;
    top: -3px;
    left: 61px;
    width: 30px;
    height: 30px;
    pointer-events: none;
}

.produits {
    margin-top: 26px;
    height: 30px;
    padding: 0 7px 0 12px;
}

.barre.produits > .saisie {
    margin-left: 3px;
}

.produits > svg {
    margin-top: 2px;
}

.code-barre {
    display: flex;
    align-items: center;
    gap: 3px;
    height: 19px;
    margin: 2px 0 0 auto;
}

.code-barre svg {
    color: #3a3d3a;
}

.code-barre .saisie {
    width: 134px;
}

.produits .barre-btns {
    margin-left: 13px;
}

.vide {
    height: 25px;
    padding: 0 3px;
    line-height: 15px;
    border-bottom: 1px solid #4675a5;
}

.liens {
    display: flex;
    gap: 5px;
    margin-top: 6px;
}

.liens a {
    color: var(--rose);
}

.resume {
    width: 124px;
    padding-top: 35px;
    display: flex;
    flex-direction: column;
    gap: 3px;
}

.total {
    margin-bottom: 2px;
    border: 1px solid #84cd15;
    border-radius: 2px;
    background: var(--blanc);
    text-align: center;
    font-family: "DejaVu Sans", Verdana, sans-serif;
}

.total-titre {
    display: grid;
    grid-template-columns: 20px 1fr 20px;
    align-items: center;
    height: 21px;
    background: #84cd15;
    color: #fff;
    font-size: 8px;
    font-weight: bold;
}

.total-titre::before {
    content: "";
}

.total-titre svg {
    margin-left: 4px;
}

.total-montant {
    line-height: 22px;
    color: #cb3340;
}

/* Pied */
.pied {
    position: relative;
    display: flex;
    align-items: flex-end;
    justify-content: flex-end;
    gap: 10px;
    margin: auto -2px 0 0;
}

.dernieres {
    display: flex;
    align-items: center;
    justify-content: center;
    gap: 3px;
    width: 163px;
    height: 21px;
    background: #9dc565;
    color: #eef6e4;
    border-radius: 2px 2px 0 0;
    font-size: 9px;
    font-weight: bold;
    white-space: nowrap;
}

.version {
    padding: 0 2px;
    background: #dfe5e6;
    color: #8e9fb5;
    font-size: 8px;
    line-height: 12px;
}
```
